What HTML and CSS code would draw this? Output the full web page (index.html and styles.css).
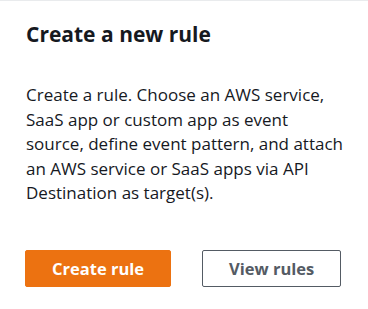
FILE: index.html
```html
<!DOCTYPE html>
<html lang="en">
<head>
    <meta charset="UTF-8">
    <meta name="viewport" content="width=device-width,initial-scale=1">
    <title>Create a new rule</title>
    <link rel="stylesheet" href="styles.css">
</head>
<body>
    <div class="panel">
        <h2 class="panel-title">Create a new rule</h2>
        <p class="panel-text">
            Create a rule. Choose an AWS service, SaaS app or custom app as event source, define event pattern, and attach an AWS service or SaaS apps via API Destination as target(s).
        </p>
        <div class="actions">
            <button class="btn btn-primary">Create rule</button>
            <button class="btn btn-normal">View rules</button>
        </div>
    </div>
</body>
</html>
```

FILE: styles.css
```css
* {
    margin: 0;
    padding: 0;
    box-sizing: border-box;
}

body {
    font-family: 'Open Sans', 'Noto Sans', Arial, sans-serif;
    background-color: #fff;
    color: #16191f;
}

.panel {
    border-top: 1px solid #e9ebed;
    padding: 17px 20px 20px 26px;
}

.panel-title {
    font-size: 21px;
    font-weight: 700;
    line-height: 32px;
    color: #16191f;
    margin-bottom: 33px;
}

.panel-text {
    font-size: 17px;
    line-height: 24.5px;
    margin-bottom: 44px;
}

.actions {
    display: flex;
    gap: 31px;
    margin-left: -1px;
}

.btn {
    font-family: inherit;
    font-size: 16.5px;
    font-weight: 700;
    height: 37px;
    padding: 0 26px;
    border-radius: 2px;
    white-space: nowrap;
    cursor: pointer;
}

.btn-primary {
    background-color: #ec7211;
    border: 1px solid #ec7211;
    color: #fff;
}

.btn-normal {
    background-color: #fff;
    border: 1px solid #545b64;
    color: #545b64;
}
```
